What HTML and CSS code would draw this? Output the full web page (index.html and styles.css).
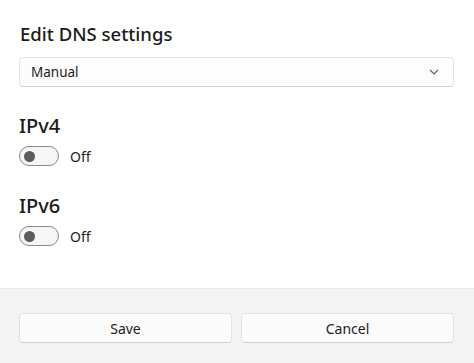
FILE: index.html
```html
<!DOCTYPE html>
<html lang="en">
<head>
<meta charset="utf-8">
<link rel="stylesheet" href="styles.css">
</head>
<body>
<div class="dialog">
  <div class="content">
    <h1 class="title">Edit DNS settings</h1>
    <div class="select">
      <span class="select-value">Manual</span>
      <svg class="chevron" width="10" height="6" viewBox="0 0 10 6"><path d="M1 1 L5 5 L9 1" fill="none" stroke="#5f5f5f" stroke-width="1.1"/></svg>
    </div>
    <h2 class="section">IPv4</h2>
    <div class="toggle-row">
      <span class="toggle"><span class="knob"></span></span>
      <span class="toggle-label">Off</span>
    </div>
    <h2 class="section">IPv6</h2>
    <div class="toggle-row">
      <span class="toggle"><span class="knob"></span></span>
      <span class="toggle-label">Off</span>
    </div>
  </div>
  <div class="footer">
    <button class="btn">Save</button>
    <button class="btn">Cancel</button>
  </div>
</div>
</body>
</html>
```
FILE: styles.css
```css
html, body {
  margin: 0;
  padding: 0;
  background: #ffffff;
}
body {
  font-family: "Noto Sans", "Open Sans", sans-serif;
  color: #1b1b1b;
}
.dialog {
  width: 474px;
  height: 363px;
  display: flex;
  flex-direction: column;
}
.content {
  flex: 1;
  padding: 20px 20px 0 19px;
}
.title {
  margin: 0 0 0 1px;
  font-size: 18.5px;
  font-weight: 500;
  line-height: 28px;
}
.select {
  margin-top: 9px;
  height: 30px;
  box-sizing: border-box;
  border: 1px solid #e5e5e5;
  border-bottom-color: #d2d2d2;
  border-radius: 4px;
  display: flex;
  align-items: center;
  padding: 0 14px 0 11px;
  background: #fdfdfd;
}
.select-value {
  flex: 1;
  font-size: 13.5px;
}
.chevron {
  display: block;
}
.section {
  margin: 26px 0 0 0;
  font-size: 20px;
  font-weight: 500;
  line-height: 26px;
}
.section + .toggle-row + .section {
  margin-top: 27px;
}
.toggle-row {
  display: flex;
  align-items: center;
  margin-top: 7px;
  height: 20px;
  gap: 11px;
}
.toggle {
  width: 40px;
  height: 20px;
  box-sizing: border-box;
  border: 1px solid #8a8a8a;
  border-radius: 10px;
  background: #f6f6f6;
  display: flex;
  align-items: center;
  padding-left: 4px;
}
.knob {
  width: 11px;
  height: 11px;
  border-radius: 50%;
  background: #5c5c5c;
}
.toggle-label {
  font-size: 14px;
}
.footer {
  height: 75px;
  box-sizing: border-box;
  background: #f3f3f3;
  border-top: 1px solid #e8e8e8;
  padding: 24px 20px 0 19px;
  display: flex;
  gap: 9px;
  align-items: flex-start;
}
.btn {
  flex: 1;
  height: 30px;
  border: 1px solid #e3e3e3;
  border-bottom-color: #cfcfcf;
  border-radius: 4px;
  background: #fbfbfb;
  font-family: "Noto Sans", "Open Sans", sans-serif;
  font-size: 14px;
  color: #1b1b1b;
  padding: 0;
}
```
